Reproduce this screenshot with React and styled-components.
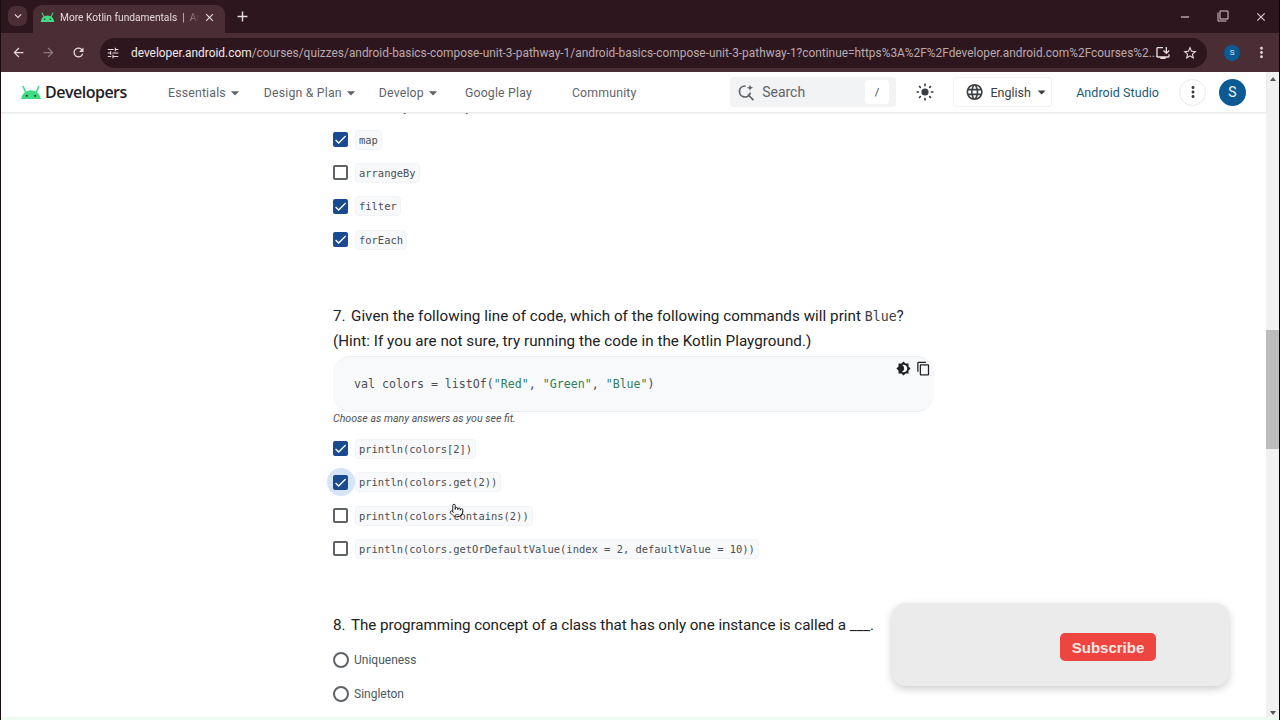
import React from "react";
import styled, { createGlobalStyle } from "styled-components";
import {
  MdAdd,
  MdArrowBack,
  MdArrowDropDown,
  MdArrowForward,
  MdBrightness4,
  MdCheck,
  MdClose,
  MdContentCopy,
  MdExpandMore,
  MdFilterNone,
  MdInstallDesktop,
  MdLanguage,
  MdMoreVert,
  MdRefresh,
  MdRemove,
  MdStarBorder,
  MdTune,
} from "react-icons/md";
import { Pointer } from "lucide-react";

const GlobalStyle = createGlobalStyle`
  html, body {
    margin: 0;
    padding: 0;
    background: #fff;
    overflow: hidden;
    font-family: Roboto, "Liberation Sans", sans-serif;
  }
  * { box-sizing: border-box; }
`;

const Screen = styled.div`
  position: relative;
  width: 1280px;
  height: 720px;
  display: flex;
  flex-direction: column;
  overflow: hidden;
  background: #fff;
  border-left: 1px solid #1a0d11;
  border-right: 1px solid #000;
`;

/* browser chrome */
const TabStrip = styled.div`
  height: 33px;
  flex: none;
  display: flex;
  align-items: flex-end;
  background: #2e161e;
  color: #e8dde0;
`;
const TabMenu = styled.div`
  width: 19px;
  height: 20px;
  margin: 0 6px 7px 7px;
  border-radius: 7px;
  background: #4a2d35;
  display: flex;
  align-items: center;
  justify-content: center;
  font-size: 14px;
`;
const Tab = styled.div`
  width: 192px;
  height: 28px;
  display: flex;
  align-items: center;
  padding: 0 7px 4px;
  background: #4a2d35;
  border-radius: 9px 9px 0 0;
  font-size: 10.2px;
`;
const TabTitle = styled.span`
  margin-left: 5px;
  width: 143px;
  white-space: nowrap;
  overflow: hidden;
  color: #e6dadd;
  -webkit-mask-image: linear-gradient(90deg, #000 85%, transparent 98%);
  mask-image: linear-gradient(90deg, #000 85%, transparent 98%);
`;
const NewTab = styled.div`
  margin: 0 0 8px 9px;
  font-size: 17px;
  display: flex;
`;
const WindowControls = styled.div`
  margin: 0 11px 9px auto;
  display: flex;
  gap: 25px;
  font-size: 14px;
  color: #d9ccd0;
`;
const Toolbar = styled.div`
  height: 39px;
  flex: none;
  display: flex;
  align-items: center;
  padding: 0 0 0 10px;
  background: #4a2d35;
  color: #e3d7da;
`;
const NavIcons = styled.div`
  display: flex;
  gap: 15px;
  font-size: 15px;
`;
const FadedIcon = styled.span`
  display: flex;
  opacity: 0.45;
`;
const Omnibox = styled.div`
  width: 1107px;
  height: 30px;
  margin-left: 14px;
  padding: 0 9px 0 6px;
  display: flex;
  align-items: center;
  border-radius: 15px;
  background: #2e161e;
  font-size: 11.9px;
`;
const Address = styled.div`
  margin-left: 11px;
  flex: 1;
  min-width: 0;
  white-space: nowrap;
  color: #b9aaae;
  span {
    color: #f0e8ea;
  }
`;
const OmniIcons = styled.div`
  display: flex;
  gap: 11px;
  font-size: 16px;
  color: #e8dde0;
`;
const ProfileDot = styled.div`
  width: 16px;
  height: 16px;
  margin-left: 17px;
  border-radius: 50%;
  background: #0b5a94;
  color: #dcebf7;
  font-size: 8px;
  display: flex;
  align-items: center;
  justify-content: center;
`;
const ToolbarMenu = styled.div`
  margin-left: 13px;
  display: flex;
  font-size: 17px;
`;

/* page */
const Viewport = styled.div`
  flex: 1;
  min-height: 0;
  display: flex;
`;
const Column = styled.div`
  width: 1265px;
  display: flex;
  flex-direction: column;
`;
const SiteNav = styled.nav`
  height: 41px;
  flex: none;
  display: flex;
  align-items: center;
  padding: 0 20px 0 19px;
  background: #fff;
  border-bottom: 1px solid #e8eaed;
  box-shadow: 0 1px 2px rgba(60, 64, 67, 0.08);
  position: relative;
  z-index: 1;
`;
const Logo = styled.div`
  display: flex;
  align-items: center;
  gap: 3px;
  width: 148px;
  font-family: "Open Sans", sans-serif;
  font-size: 16px;
  font-weight: 600;
  letter-spacing: -0.5px;
  color: #202124;
`;
const NavItem = styled.div`
  display: flex;
  align-items: center;
  margin-right: ${(p) => p.$space}px;
  padding-top: 1px;
  font-size: 12.3px;
  letter-spacing: 0.18px;
  color: #5f6368;
  white-space: nowrap;
  svg {
    font-size: 20px;
    margin-left: -1px;
  }
`;
const SearchBox = styled.div`
  width: 166px;
  height: 30px;
  margin-left: auto;
  padding: 0 7px;
  display: flex;
  align-items: center;
  border-radius: 3px;
  background: #f1f3f4;
  color: #5f6368;
  font-size: 14px;
`;
const SearchLabel = styled.span`
  margin-left: 7px;
  flex: 1;
`;
const SlashKey = styled.span`
  width: 24px;
  height: 24px;
  border-radius: 4px;
  background: #fff;
  display: flex;
  align-items: center;
  justify-content: center;
  font-size: 11px;
  color: #3c4043;
`;
const ThemeToggle = styled.div`
  margin: 0 19px 0 20px;
  display: flex;
`;
const LanguagePicker = styled.div`
  width: 99px;
  height: 30px;
  padding-left: 11px;
  display: flex;
  align-items: center;
  gap: 6px;
  border: 1px solid #f1f3f4;
  border-radius: 3px;
  color: #3c4043;
  font-size: 12.5px;
  svg:last-child {
    margin-left: -5px;
  }
`;
const StudioLink = styled.div`
  margin: 0 20px 0 24px;
  color: #1a5a7a;
  font-size: 12.5px;
  letter-spacing: 0.05px;
  white-space: nowrap;
`;
const RoundButton = styled.div`
  width: 27px;
  height: 27px;
  border-radius: 50%;
  border: 1px solid #e8eaed;
  display: flex;
  align-items: center;
  justify-content: center;
  font-size: 18px;
  color: #3c4043;
`;
const Avatar = styled.div`
  width: 27px;
  height: 27px;
  margin-left: 13px;
  border-radius: 50%;
  background: #0b5a94;
  color: #f2f7fb;
  display: flex;
  align-items: center;
  justify-content: center;
  font-size: 14px;
`;
const Page = styled.main`
  flex: 1;
  min-height: 0;
  overflow: hidden;
  padding-left: 332px;
`;
const Hint = styled.p`
  margin: ${(p) => p.$top || 0}px 0 0;
  height: 14px;
  line-height: 14px;
  font-size: 10.6px;
  font-style: italic;
  color: #4d5156;
`;
const Options = styled.div`
  margin-top: ${(p) => p.$top}px;
  display: grid;
  grid-auto-rows: 33.33px;
`;
const Option = styled.div`
  display: flex;
  align-items: center;
  gap: ${(p) => p.$gap}px;
`;
const Checkbox = styled.span`
  position: relative;
  width: 15px;
  height: 15px;
  flex: none;
  border-radius: 2px;
  display: flex;
  align-items: center;
  justify-content: center;
  color: #fff;
  font-size: 15px;
  background: ${(p) => (p.$checked ? "#1a4a8f" : "#fff")};
  border: ${(p) => (p.$checked ? "none" : "2px solid #5f6368")};
  &::before {
    content: "";
    display: ${(p) => (p.$halo ? "block" : "none")};
    position: absolute;
    left: -6.5px;
    top: -6.5px;
    width: 28px;
    height: 28px;
    border-radius: 50%;
    background: #d5e4f6;
    z-index: 0;
  }
  svg {
    position: relative;
    z-index: 1;
  }
  ${(p) => (p.$halo ? "background: none;" : "")}
`;
const CheckFill = styled.span`
  position: absolute;
  inset: 0;
  border-radius: 2px;
  background: #1a4a8f;
`;
const Radio = styled.span`
  width: 16px;
  height: 16px;
  flex: none;
  border-radius: 50%;
  border: 2px solid #5f6368;
`;
const Code = styled.code`
  display: inline-block;
  padding: 2px 3px;
  line-height: 14px;
  font-family: "DejaVu Sans Mono", monospace;
  font-size: 10.45px;
  color: #4a4f54;
  background: #f8f9fa;
  border: 1px solid #f1f3f4;
  border-radius: 4px;
  white-space: nowrap;
`;
const OptionText = styled.span`
  font-size: 12px;
  color: #4a5a60;
`;
const Question = styled.h3`
  margin: ${(p) => p.$top}px 0 0;
  font-size: 15.2px;
  font-weight: 400;
  line-height: 24px;
  letter-spacing: ${(p) => p.$tracking || 0}px;
  color: #202124;
  white-space: nowrap;
  code {
    padding: 1px 0;
    font-family: "DejaVu Sans Mono", monospace;
    font-size: 13.2px;
    letter-spacing: 0;
    color: #3c4043;
  }
`;
const QuestionNumber = styled.span`
  display: inline-block;
  width: 18px;
`;
const CodeBlock = styled.div`
  position: relative;
  width: 601px;
  height: 56px;
  margin-top: 3px;
  padding-left: 21px;
  display: flex;
  align-items: center;
  border-radius: 18px;
  border-top: 1px solid #eceff1;
  border-bottom: 1px solid #eceff1;
  background: #f8f9fa;
  font-family: "DejaVu Sans Mono", monospace;
  font-size: 11.62px;
  color: #4a4f54;
  white-space: pre;
`;
const Str = styled.span`
  color: #2e7d5b;
`;
const CodeTools = styled.div`
  position: absolute;
  top: 4px;
  right: 3px;
  display: flex;
  gap: 5px;
  font-size: 15px;
  color: #202124;
`;
const PointerCursor = styled.div`
  position: absolute;
  left: 448px;
  top: 503px;
  display: flex;
  color: #1b1b1b;
  z-index: 2;
`;
const Scrollbar = styled.div`
  width: 13px;
  flex: none;
  display: flex;
  flex-direction: column;
  align-items: center;
  justify-content: space-between;
  background: #f1f1f1;
  padding: 5px 0 2px;
  position: relative;
`;
const ScrollArrow = styled.span`
  width: 0;
  height: 0;
  border-left: 3px solid transparent;
  border-right: 3px solid transparent;
  ${(p) => (p.$up ? "border-bottom: 4px solid #555;" : "border-top: 4px solid #555;")}
`;
const ScrollThumb = styled.div`
  position: absolute;
  left: 0;
  top: 258px;
  width: 13px;
  height: 119px;
  background: #bcbcbc;
`;
const BottomStrip = styled.div`
  height: 3px;
  flex: none;
  background: #eefbf0;
`;
const SubscribeCard = styled.div`
  position: absolute;
  left: 891px;
  top: 603px;
  width: 337px;
  height: 83px;
  padding: 5px 0 0 168px;
  display: flex;
  align-items: center;
  border-radius: 14px;
  background: #ebebeb;
  box-shadow: 0 3px 8px rgba(0, 0, 0, 0.2);
`;
const SubscribeButton = styled.div`
  width: 96px;
  height: 28px;
  border-radius: 5px;
  background: #ee4540;
  color: #fde8e6;
  display: flex;
  align-items: center;
  justify-content: center;
  font-family: "Liberation Sans", sans-serif;
  font-size: 15px;
  font-weight: 700;
`;

const AndroidHead = ({ size = 22 }) => (
  <svg width={size} height={size * 0.68} viewBox="0 0 22 15">
    <path d="M1 15C1.4 9.5 5.2 5.2 11 5.2S20.6 9.5 21 15Z" fill="#3ddc84" />
    <path d="M5.5 6.8 3.2 1.6M16.5 6.8l2.3-5.2" stroke="#3ddc84" strokeWidth="1.6" strokeLinecap="round" />
    <circle cx="6.8" cy="10.8" r="1.1" fill="#1d3b2a" />
    <circle cx="15.2" cy="10.8" r="1.1" fill="#1d3b2a" />
  </svg>
);

const SparkSearch = () => (
  <svg width="18" height="18" viewBox="0 0 18 18" fill="none" stroke="#5f6368" strokeWidth="1.7">
    <path d="M8 3a5.5 5.5 0 1 0 5.2 7.2" strokeLinecap="round" />
    <path d="m11.3 12 4.7 4.7" strokeLinecap="round" />
    <path d="M13 1.5c.3 2 1 2.8 3.2 3.2-2.2.4-2.9 1.200-3.200 3.200-.3-2-1-2.800-3.200-3.200 2.200-.4 2.900-1.200 3.200-3.200Z" fill="#5f6368" stroke="none" />
  </svg>
);

const DottedSun = () => (
  <svg width="18" height="18" viewBox="0 0 18 18" fill="#3c4043">
    <circle cx="9" cy="9" r="3.6" />
    <g stroke="#3c4043" strokeWidth="1.7" strokeLinecap="round">
      <path d="M9 1.200v1.200M9 15.600v1.200M1.200 9h1.200M15.600 9h1.200M3.500 3.500l.8.8M13.700 13.700l.8.8M3.500 14.500l.8-.8M13.700 4.300l.8-.8" />
    </g>
  </svg>
);

const CheckOption = ({ checked, halo, children }) => (
  <Option $gap={7}>
    <Checkbox $checked={checked} $halo={halo}>
      {halo && <CheckFill />}
      {checked && <MdCheck />}
    </Checkbox>
    <Code>{children}</Code>
  </Option>
);

const RadioOption = ({ children }) => (
  <Option $gap={5}>
    <Radio />
    <OptionText>{children}</OptionText>
  </Option>
);

export default function App() {
  return (
    <Screen>
      <GlobalStyle />
      <TabStrip>
        <TabMenu>
          <MdExpandMore />
        </TabMenu>
        <Tab>
          <AndroidHead size={15} />
          <TabTitle>More Kotlin fundamentals&nbsp; | &nbsp;Android</TabTitle>
          <MdClose size={13} />
        </Tab>
        <NewTab>
          <MdAdd />
        </NewTab>
        <WindowControls>
          <MdRemove />
          <MdFilterNone size={12} />
          <MdClose />
        </WindowControls>
      </TabStrip>
      <Toolbar>
        <NavIcons>
          <MdArrowBack />
          <FadedIcon>
            <MdArrowForward />
          </FadedIcon>
          <MdRefresh />
        </NavIcons>
        <Omnibox>
          <MdTune size={14} />
          <Address>
            <span>developer.android.com</span>
            /courses/quizzes/android-basics-compose-unit-3-pathway-1/android-basics-compose-unit-3-pathway-1?continue=https%3A%2F%2Fdeveloper.android.com%2Fcourses%2...
          </Address>
          <OmniIcons>
            <MdInstallDesktop />
            <MdStarBorder />
          </OmniIcons>
        </Omnibox>
        <ProfileDot>S</ProfileDot>
        <ToolbarMenu>
          <MdMoreVert />
        </ToolbarMenu>
      </Toolbar>
      <Viewport>
        <Column>
          <SiteNav>
            <Logo>
              <AndroidHead />
              Developers
            </Logo>
            <NavItem $space={19}>
              Essentials <MdArrowDropDown />
            </NavItem>
            <NavItem $space={18}>
              Design &amp; Plan <MdArrowDropDown />
            </NavItem>
            <NavItem $space={22}>
              Develop <MdArrowDropDown />
            </NavItem>
            <NavItem $space={40}>Google Play</NavItem>
            <NavItem $space={0}>Community</NavItem>
            <SearchBox>
              <SparkSearch />
              <SearchLabel>Search</SearchLabel>
              <SlashKey>/</SlashKey>
            </SearchBox>
            <ThemeToggle>
              <DottedSun />
            </ThemeToggle>
            <LanguagePicker>
              <MdLanguage size={20} />
              English
              <MdArrowDropDown size={20} />
            </LanguagePicker>
            <StudioLink>Android Studio</StudioLink>
            <RoundButton>
              <MdMoreVert />
            </RoundButton>
            <Avatar>S</Avatar>
          </SiteNav>
          <Page>
            <Hint $top={-11}>Choose as many answers as you see fit.</Hint>
            <Options $top={7}>
              <CheckOption checked>map</CheckOption>
              <CheckOption>arrangeBy</CheckOption>
              <CheckOption checked>filter</CheckOption>
              <CheckOption checked>forEach</CheckOption>
            </Options>
            <Question $top={48} $tracking={0.04}>
              <QuestionNumber>7.</QuestionNumber>Given the following line of code, which of the following commands will print <code>Blue</code>?
              <br />
              (Hint: If you are not sure, try running the code in the Kotlin Playground.)
            </Question>
            <CodeBlock>
              {"val colors = listOf("}
              <Str>"Red"</Str>
              {", "}
              <Str>"Green"</Str>
              {", "}
              <Str>"Blue"</Str>
              {")"}
              <CodeTools>
                <MdBrightness4 />
                <MdContentCopy />
              </CodeTools>
            </CodeBlock>
            <Hint>Choose as many answers as you see fit.</Hint>
            <Options $top={6}>
              <CheckOption checked>println(colors[2])</CheckOption>
              <CheckOption checked halo>
                println(colors.get(2))
              </CheckOption>
              <CheckOption>println(colors.contains(2))</CheckOption>
              <CheckOption>println(colors.getOrDefaultValue(index = 2, defaultValue = 10))</CheckOption>
            </Options>
            <Question $top={47} $tracking={-0.06}>
              <QuestionNumber>8.</QuestionNumber>The programming concept of a class that has only one instance is called a ___.
            </Question>
            <Options $top={7}>
              <RadioOption>Uniqueness</RadioOption>
              <RadioOption>Singleton</RadioOption>
              <RadioOption>Object</RadioOption>
            </Options>
          </Page>
        </Column>
        <Scrollbar>
          <ScrollArrow $up />
          <ScrollThumb />
          <ScrollArrow />
        </Scrollbar>
      </Viewport>
      <BottomStrip />
      <PointerCursor>
        <Pointer size={15} strokeWidth={1.5} />
      </PointerCursor>
      <SubscribeCard>
        <SubscribeButton>Subscribe</SubscribeButton>
      </SubscribeCard>
    </Screen>
  );
}
